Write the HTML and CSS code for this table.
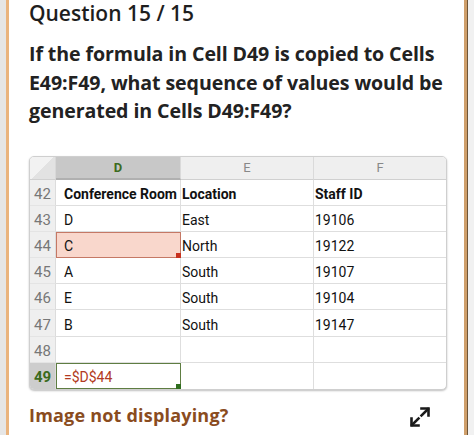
FILE: index.html
```html
<!DOCTYPE html>
<html>
<head>
<meta charset="utf-8">
<link rel="stylesheet" href="styles.css">
</head>
<body>
<div class="page">
  <div class="strip-left"></div>
  <div class="card">
    <h1 class="qnum">Question 15 / 15</h1>
    <p class="qtext">If the formula in Cell D49 is copied to Cells E49:F49, what sequence of values would be generated in Cells D49:F49?</p>
    <div class="sheet">
      <div class="corner"></div>
      <div class="ch ch-sel">D</div>
      <div class="ch">E</div>
      <div class="ch ch-last">F</div>

      <div class="rn">42</div><div class="c bold">Conference Room</div><div class="c bold">Location</div><div class="c bold last">Staff ID</div>
      <div class="rn">43</div><div class="c">D</div><div class="c">East</div><div class="c last">19106</div>
      <div class="rn">44</div><div class="c sel-red">C<span class="handle red"></span></div><div class="c">North</div><div class="c last">19122</div>
      <div class="rn">45</div><div class="c">A</div><div class="c">South</div><div class="c last">19107</div>
      <div class="rn">46</div><div class="c">E</div><div class="c">South</div><div class="c last">19104</div>
      <div class="rn">47</div><div class="c">B</div><div class="c">South</div><div class="c last">19147</div>
      <div class="rn">48</div><div class="c"></div><div class="c"></div><div class="c last"></div>
      <div class="rn rn-sel bottom">49</div><div class="c sel-green bottom formula">=$D$44<span class="handle green"></span></div><div class="c bottom"></div><div class="c last bottom"></div>
    </div>
    <div class="footer">
      <span class="help">Image not displaying?</span>
      <svg class="expand" width="24" height="24" viewBox="0 0 24 24" fill="none" stroke="#1a1a1a" stroke-width="2.6" stroke-linecap="square">
        <path d="M4 20 L10.5 13.5"/>
        <path d="M3.5 13.5 V20.5 H10.5" stroke-linejoin="miter"/>
        <path d="M20 4 L13.5 10.5"/>
        <path d="M13.5 3.5 H20.5 V10.5" stroke-linejoin="miter"/>
      </svg>
    </div>
  </div>
  <div class="strip-right"></div>
</div>
</body>
</html>
```

FILE: styles.css
```css
html, body {
  margin: 0;
  padding: 0;
  background: #ededed;
}
.page {
  display: flex;
  width: 474px;
  height: 435px;
  overflow: hidden;
}
.strip-left {
  width: 6px;
  flex: none;
  background: #e6e6e6;
}
.card {
  flex: 1;
  min-width: 0;
  background: #fff;
  border-left: 3px solid #eab47e;
  border-right: 3px solid #cf9f6b;
  padding: 0 0 0 20px;
  font-family: "Open Sans", "Noto Sans", sans-serif;
  color: #222;
}
.strip-right {
  width: 6px;
  flex: none;
  background: #f1f1f1;
  border-left: 1.5px solid #6f5638;
}
.qnum {
  margin: 0;
  font-size: 21px;
  font-weight: 600;
  line-height: 27px;
  color: #1e1e1e;
}
.qtext {
  margin: 13px 0 0 0;
  width: 425px;
  font-size: 19.6px;
  font-weight: 700;
  line-height: 28.5px;
  color: #222;
  letter-spacing: -0.1px;
}
.sheet {
  margin-top: 30px;
  width: 416px;
  display: grid;
  grid-template-columns: 26px 125px 133px 132px;
  grid-template-rows: 23px repeat(8, 26.2px);
  border: 1px solid #cfcfcf;
  border-radius: 5px;
  overflow: hidden;
  box-shadow: 0 1px 2px rgba(0,0,0,0.25);
  font-family: Roboto, "Liberation Sans", sans-serif;
  font-size: 14px;
  color: #111;
  background: #fff;
}
.corner {
  background: linear-gradient(135deg, #f2f2f2 50%, #e2e2e2 50%);
  border-right: 1px solid #d8d8d8;
  border-bottom: 1px solid #d0d0d0;
}
.ch {
  background: #efefef;
  color: #888;
  font-size: 13px;
  display: flex;
  align-items: center;
  justify-content: center;
  border-right: 1px solid #dadada;
  border-bottom: 1px solid #d0d0d0;
}
.ch-sel {
  background: #c8c8c8;
  color: #3d6b20;
  font-weight: 700;
  border-bottom: 2px solid #b0b0b0;
}
.ch-last { border-right: none; }
.rn {
  background: #efefef;
  color: #777;
  font-size: 15px;
  display: flex;
  align-items: center;
  justify-content: center;
  padding-top: 3px;
  box-sizing: border-box;
  border-right: 1px solid #dcdcdc;
  border-bottom: 1px solid #e4e4e4;
}
.rn-sel {
  background: #cdcdcd;
  color: #3b6a1c;
  font-weight: 700;
}
.c {
  position: relative;
  display: flex;
  align-items: center;
  padding: 3px 0 0 8px;
  box-sizing: border-box;
  border-right: 1px solid #dedede;
  border-bottom: 1px solid #dedede;
  white-space: nowrap;
}
.c.last { border-right: none; padding-left: 1px; }
.c:nth-child(4n+3) { padding-left: 1px; }
.bottom { border-bottom: none; }
.bold { font-weight: 700; }
.sel-red {
  background: #f9d7cc;
  border: 1px solid #c57865;
  padding-left: 7px;
}
.sel-green {
  border: 1px solid #5e7d42;
  padding-left: 7px;
}
.formula { color: #b23a22; }
.handle {
  position: absolute;
  right: -1px;
  bottom: -1px;
  width: 5px;
  height: 5px;
}
.handle.red { background: #c8321f; }
.handle.green { background: #2f6e1e; }
.footer {
  display: flex;
  align-items: center;
  justify-content: space-between;
  width: 403px;
  margin-top: 11px;
}
.help {
  font-size: 18px;
  font-weight: 700;
  color: #8a4c1e;
  letter-spacing: 0.2px;
}
.expand { margin-top: 4px; }
```
